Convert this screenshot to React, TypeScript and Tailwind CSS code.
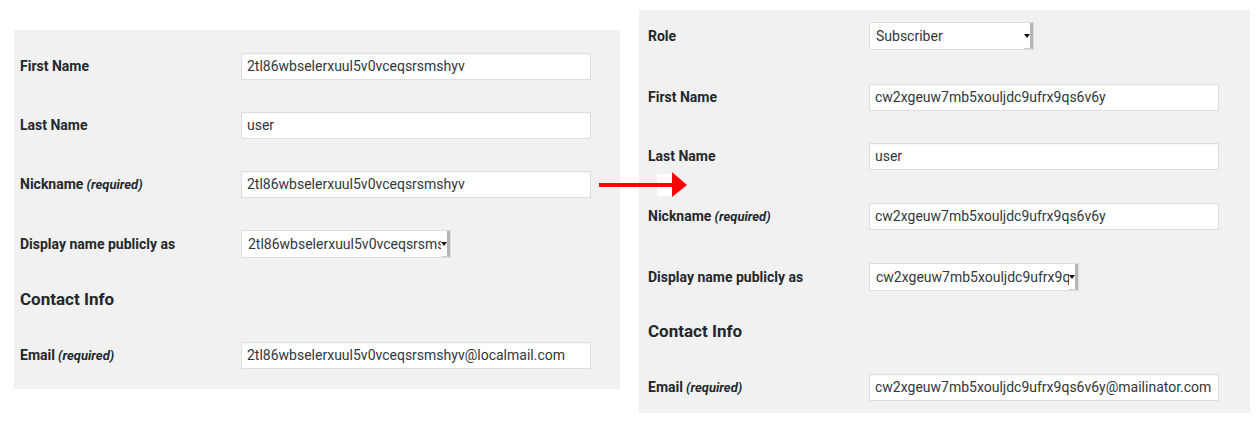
import React from "react";

const font = { fontFamily: "Roboto, 'Liberation Sans', sans-serif" };

function Input({ value }: { value: string }) {
  return (
    <div className="h-[27px] w-[350px] border border-[#dddddd] bg-white px-[5px] flex items-center overflow-hidden whitespace-nowrap text-[14px] text-[#32373c] shadow-[inset_0_1px_2px_rgba(0,0,0,0.04)]">
      {value}
    </div>
  );
}

function Select({ value, w }: { value: string; w: string }) {
  return (
    <div className={`h-[28px] ${w} border border-[#dddddd] bg-white flex items-stretch text-[14px] text-[#32373c]`}>
      <div className="flex-1 overflow-hidden whitespace-nowrap pl-[6px] flex items-center">{value}</div>
      <div className="w-[9px] flex items-center justify-start border-r-[3px] border-r-[#b4b4b4] border-b border-b-[#cfcfcf]">
        <div className="w-0 h-0 border-l-[3px] border-r-[3px] border-t-[4px] border-l-transparent border-r-transparent border-t-[#111]" />
      </div>
    </div>
  );
}

function Label({ text, req }: { text: string; req?: boolean }) {
  return (
    <div className="text-[14px] font-bold text-[#23282d] whitespace-nowrap">
      {text}
      {req && <span className="italic text-[13px] font-bold"> (required)</span>}
    </div>
  );
}

function Row({ label, req, children, cls, lw }: { label: string; req?: boolean; children: React.ReactNode; cls: string; lw: string }) {
  return (
    <div className={`flex items-center ${cls}`}>
      <div className={lw}>
        <Label text={label} req={req} />
      </div>
      {children}
    </div>
  );
}

export default function App() {
  return (
    <div className="relative w-[1260px] h-[425px] bg-white overflow-hidden" style={font}>
      <div className="flex items-start">
        {/* Left panel */}
        <div className="ml-[14px] mt-[30px] w-[606px] h-[359px] bg-[#f1f1f1] pl-[6px] pt-[23px] flex flex-col">
          <Row label="First Name" lw="w-[221px]" cls="">
            <Input value="2tl86wbselerxuul5v0vceqsrsmshyv" />
          </Row>
          <Row label="Last Name" lw="w-[221px]" cls="mt-[32px]">
            <Input value="user" />
          </Row>
          <Row label="Nickname" req lw="w-[221px]" cls="mt-[32px]">
            <Input value="2tl86wbselerxuul5v0vceqsrsmshyv" />
          </Row>
          <Row label="Display name publicly as" lw="w-[221px]" cls="mt-[32px]">
            <Select value="2tl86wbselerxuul5v0vceqsrsmshyv" w="w-[210px]" />
          </Row>
          <div className="mt-[31px] h-[22px] flex items-center text-[17px] font-bold text-[#23282d]">Contact Info</div>
          <Row label="Email" req lw="w-[221px]" cls="mt-[31px]">
            <Input value="2tl86wbselerxuul5v0vceqsrsmshyv@localmail.com" />
          </Row>
        </div>

        {/* Right panel */}
        <div className="ml-[19px] mt-[10px] w-[611px] h-[403px] bg-[#f1f1f1] pl-[9px] pt-[12px] flex flex-col">
          <Row label="Role" lw="w-[221px]" cls="">
            <Select value="Subscriber" w="w-[165px]" />
          </Row>
          <Row label="First Name" lw="w-[221px]" cls="mt-[34px]">
            <Input value="cw2xgeuw7mb5xouljdc9ufrx9qs6v6y" />
          </Row>
          <Row label="Last Name" lw="w-[221px]" cls="mt-[32px]">
            <Input value="user" />
          </Row>
          <Row label="Nickname" req lw="w-[221px]" cls="mt-[33px]">
            <Input value="cw2xgeuw7mb5xouljdc9ufrx9qs6v6y" />
          </Row>
          <Row label="Display name publicly as" lw="w-[221px]" cls="mt-[33px]">
            <Select value="cw2xgeuw7mb5xouljdc9ufrx9qs6v6y" w="w-[210px]" />
          </Row>
          <div className="mt-[30px] h-[22px] flex items-center text-[17px] font-bold text-[#23282d]">Contact Info</div>
          <Row label="Email" req lw="w-[221px]" cls="mt-[31px]">
            <Input value="cw2xgeuw7mb5xouljdc9ufrx9qs6v6y@mailinator.com" />
          </Row>
        </div>
      </div>

      {/* annotation: white patch + red arrow */}
      <div className="absolute left-[657px] top-[174px] w-[15px] h-[22px] bg-white" />
      <svg className="absolute left-[596px] top-[168px]" width="96" height="34" viewBox="0 0 96 34">
        <rect x="3" y="15" width="74" height="4" fill="#ff0000" />
        <polygon points="76,4 91,17 76,29" fill="#ff0000" />
      </svg>
    </div>
  );
}
